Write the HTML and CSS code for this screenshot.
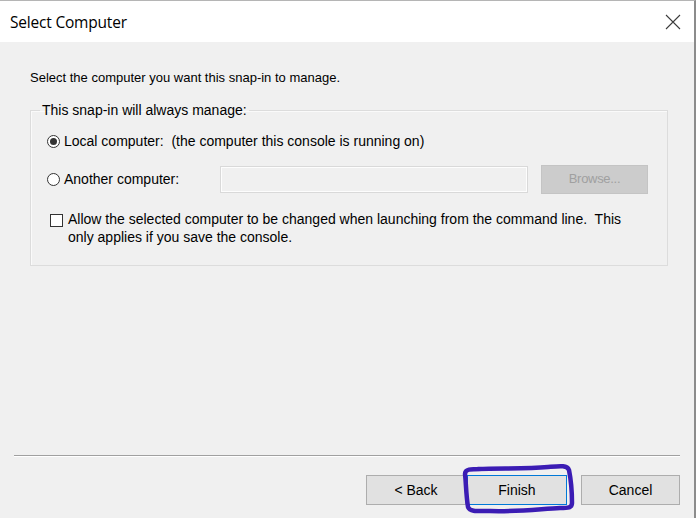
FILE: index.html
```html
<!DOCTYPE html>
<html>
<head>
<meta charset="utf-8">
<link rel="stylesheet" href="styles.css">
</head>
<body>
<div class="window">
  <div class="titlebar">
    <span class="title">Select Computer</span>
    <svg class="close" width="16" height="16" viewBox="0 0 16 16"><path d="M1 1 L15 15 M15 1 L1 15" stroke="#3c3c3c" stroke-width="1.1" fill="none"/></svg>
  </div>
  <div class="main">
    <p class="intro">Select the computer you want this snap-in to manage.</p>
    <fieldset class="group">
      <legend class="legend">This snap-in will always manage:</legend>
      <div class="row row-local">
        <span class="radio checked"></span>
        <span class="label pre">Local computer:  (the computer this console is running on)</span>
      </div>
      <div class="row row-another">
        <div class="choice">
          <span class="radio"></span>
          <span class="label">Another computer:</span>
        </div>
        <div class="textbox"></div>
        <div class="browse">Browse...</div>
      </div>
      <div class="row row-check">
        <span class="checkbox"></span>
        <span class="label pre">Allow the selected computer to be changed when launching from the command line.  This
only applies if you save the console.</span>
      </div>
    </fieldset>
  </div>
  <div class="footer">
    <div class="separator"></div>
    <div class="buttons">
      <div class="btn">&lt; Back</div>
      <div class="btn default">Finish</div>
      <div class="btn cancel">Cancel</div>
    </div>
  </div>
  <svg class="scribble" width="696" height="518" viewBox="0 0 696 518">
    <path d="M478 469 C500 468, 525 469, 548 467 C560 466, 567 465, 569 470 C571 480, 572 492, 572 503 C572 508, 568 508, 560 508 C540 509, 515 512, 490 511 C478 511, 470 512, 468 507 C466 495, 466 482, 465 474 C465 469, 470 469, 482 469"
      fill="none" stroke="#3b1cb4" stroke-width="4.5" stroke-linecap="round" stroke-linejoin="round"/>
  </svg>
</div>
</body>
</html>
```

FILE: styles.css
```css
html, body {
  margin: 0;
  padding: 0;
}
body {
  width: 696px;
  height: 518px;
  overflow: hidden;
  background: #f0f0f0;
  font-family: "Liberation Sans", Arial, sans-serif;
  font-size: 13px;
  color: #000;
}
.window {
  position: relative;
  box-sizing: border-box;
  width: 696px;
  height: 518px;
  border-top: 1px solid #b5b5b5;
  border-right: 2px solid #8c8c8c;
  display: flex;
  flex-direction: column;
  background: #f0f0f0;
}
.titlebar {
  height: 41px;
  background: #fff;
  display: flex;
  align-items: center;
  justify-content: space-between;
  padding: 0 13px 0 10px;
  flex: none;
}
.title {
  font-family: "Open Sans", "Liberation Sans", sans-serif;
  font-size: 15.5px;
  color: #000;
  letter-spacing: -0.2px;
}
.close {
  display: block;
}
.main {
  flex: 1;
  padding: 0 26px 0 30px;
}
.intro {
  margin: 27px 0 0 0;
  line-height: 18px;
}
.group {
  margin: 14px 0 0 0;
  padding: 13px 0 19px 16px;
  border: 1px solid #dcdcdc;
  box-shadow: inset 1px 1px 0 #fafafa;
  min-width: 0;
  font-size: 14px;
}
.legend {
  margin-left: -7px;
  padding: 0 2px;
  line-height: 18px;
}
.row {
  display: flex;
  align-items: center;
  line-height: 18px;
}
.pre {
  white-space: pre;
}
.row-another {
  margin-top: 14px;
  height: 30px;
}
.choice {
  width: 173px;
  display: flex;
  align-items: center;
}
.radio {
  box-sizing: border-box;
  width: 13px;
  height: 13px;
  border-radius: 50%;
  border: 1px solid #333;
  background: #fff;
  margin-right: 4px;
  flex: none;
  display: flex;
  align-items: center;
  justify-content: center;
}
.radio.checked::after {
  content: "";
  width: 7px;
  height: 7px;
  border-radius: 50%;
  background: #333;
}
.textbox {
  box-sizing: border-box;
  width: 308px;
  height: 27px;
  border: 1px solid #d9d9d9;
  box-shadow: inset 0 0 0 1px #fdfdfd;
  background: #f0f0f0;
}
.browse {
  box-sizing: border-box;
  width: 107px;
  height: 29px;
  margin-left: 13px;
  background: #cccccc;
  border: 1px solid #c4c4c4;
  color: #a0a0a0;
  font-size: 13px;
  letter-spacing: -0.3px;
  display: flex;
  align-items: center;
  justify-content: center;
}
.row-check {
  margin-top: 16px;
  padding-left: 3px;
  align-items: flex-start;
}
.checkbox {
  box-sizing: border-box;
  width: 13px;
  height: 13px;
  border: 1px solid #333;
  background: #fff;
  margin: 4px 5px 0 0;
  flex: none;
}
.footer {
  flex: none;
  height: 63px;
  box-sizing: border-box;
}
.separator {
  margin: 0 14px;
  height: 1px;
  border-top: 1px solid #a0a0a0;
  background: #fff;
}
.buttons {
  display: flex;
  justify-content: flex-end;
  padding-right: 14px;
  margin-top: 18px;
}
.btn {
  box-sizing: border-box;
  width: 100px;
  height: 30px;
  background: #e1e1e1;
  border: 1px solid #adadad;
  display: flex;
  align-items: center;
  justify-content: center;
  font-size: 14px;
}
.btn.default {
  margin-left: 1px;
  border-color: #0078d7;
}
.btn.cancel {
  width: 99px;
  margin-left: 14px;
}
.scribble {
  position: absolute;
  left: 0;
  top: -1px;
  pointer-events: none;
}
```
